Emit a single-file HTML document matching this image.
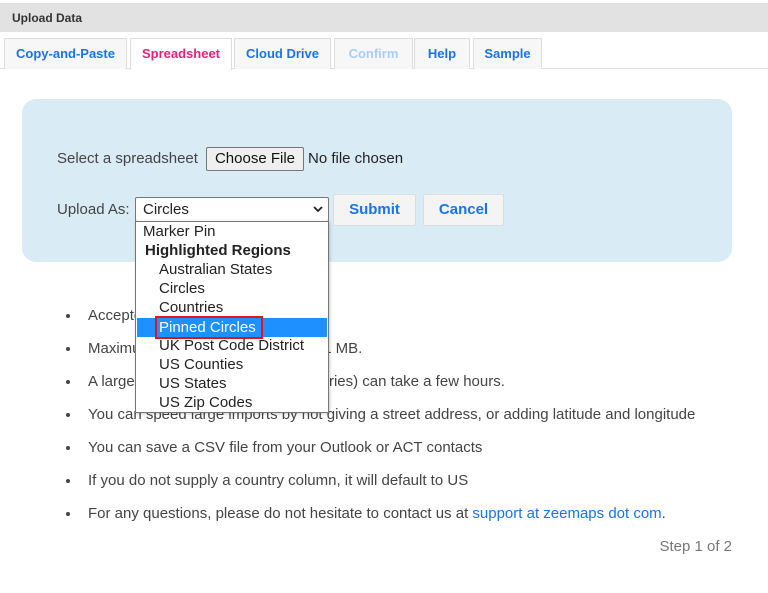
<!DOCTYPE html>
<html><head><style>
*{margin:0;padding:0;box-sizing:border-box}
body{width:768px;height:593px;background:#fff;font-family:"Liberation Sans",Arial,sans-serif;position:relative;overflow:hidden;color:#444}
.a{position:absolute;white-space:nowrap}
.hdr{left:0;top:3px;width:768px;height:29px;background:#e2e2e2;font-weight:bold;font-size:12px;color:#333;padding:8px 12px}
.tab{top:38px;height:31px;border:1px solid #ddd;border-bottom:none;background:#f7f7f7;font-weight:bold;font-size:13px;color:#1a73e8;text-align:center;line-height:30px}
.panel{left:22px;top:99px;width:710px;height:163px;background:#d9ebf4;border-radius:14px}
.t15{font-size:15px;color:#444}
.btn{background:#f4f4f4;border:1px solid #ddd;border-radius:2px;font-weight:bold;font-size:15px;color:#1a73e8;text-align:center}
.li{left:88px;font-size:15px;color:#444}
.dot{left:66px;width:4px;height:4px;border-radius:50%;background:#444}
.opt{left:137px;width:190px;height:19px;font-size:15px;color:#222;line-height:19px}
</style></head><body>
<div class="a hdr">Upload Data</div>
<div class="a" style="left:0;top:68px;width:768px;height:1px;background:#ddd"></div>
<div class="a tab" style="left:4px;width:123px">Copy-and-Paste</div>
<div class="a tab" style="left:130px;width:102px;background:#fff;color:#e8217a;height:32px">Spreadsheet</div>
<div class="a tab" style="left:234px;width:97px">Cloud Drive</div>
<div class="a tab" style="left:334px;width:79px;color:#a9cdf7">Confirm</div>
<div class="a tab" style="left:414px;width:56px">Help</div>
<div class="a tab" style="left:473px;width:69px">Sample</div>

<div class="a panel"></div>
<div class="a t15" style="left:57px;top:150px">Select a spreadsheet</div>
<div class="a" style="left:206px;top:147px;width:98px;height:24px;background:#efefef;border:1px solid #767676;border-radius:2px;font-size:15px;color:#111;text-align:center;line-height:22px">Choose File</div>
<div class="a t15" style="left:308px;top:150px;color:#222">No file chosen</div>
<div class="a t15" style="left:57px;top:201px">Upload As:</div>
<div class="a" style="left:135px;top:197px;width:194px;height:25px;background:#fff;border:1px solid #767676;border-radius:2px;font-size:15px;color:#222;padding:3px 7px">Circles
<svg style="position:absolute;right:5px;top:8px" width="10" height="7" viewBox="0 0 10 7"><path d="M1 1l4 4 4-4" stroke="#222" stroke-width="1.8" fill="none"/></svg></div>
<div class="a btn" style="left:333px;top:194px;width:83px;height:32px;line-height:30px">Submit</div>
<div class="a btn" style="left:423px;top:194px;width:81px;height:32px;line-height:30px">Cancel</div>

<div class="a dot" style="top:314px"></div><div class="a li" style="top:307px">Accepted formats</div>
<div class="a dot" style="top:347px"></div><div class="a li" style="top:340px">Maximum size of the uploaded file: 1 MB.</div>
<div class="a dot" style="top:380px"></div><div class="a li" style="top:373px">A large import (several thousand entries) can take a few hours.</div>
<div class="a dot" style="top:413px"></div><div class="a li" style="top:406px">You can speed large imports by not giving a street address, or adding latitude and longitude</div>
<div class="a dot" style="top:446px"></div><div class="a li" style="top:439px">You can save a CSV file from your Outlook or ACT contacts</div>
<div class="a dot" style="top:479px"></div><div class="a li" style="top:472px">If you do not supply a country column, it will default to US</div>
<div class="a dot" style="top:512px"></div><div class="a li" style="top:505px">For any questions, please do not hesitate to contact us at <span style="color:#1a73e8">support at zeemaps dot com</span>.</div>
<div class="a" style="right:36px;top:538px;font-size:15px;color:#777">Step 1 of 2</div>

<div class="a" style="left:135px;top:221px;width:194px;height:192px;background:#fff;border:1px solid #767676;box-shadow:1px 1px 3px rgba(0,0,0,.2)"></div>
<div class="a opt" style="top:222px;padding-left:6px">Marker Pin</div>
<div class="a opt" style="top:241px;padding-left:8px;font-weight:bold">Highlighted Regions</div>
<div class="a opt" style="top:260px;padding-left:22px">Australian States</div>
<div class="a opt" style="top:279px;padding-left:22px">Circles</div>
<div class="a opt" style="top:298px;padding-left:22px">Countries</div>
<div class="a opt" style="top:318px;padding-left:22px;background:#1e90ff;color:#fff">Pinned Circles</div>
<div class="a" style="left:155px;top:316px;width:108px;height:23px;border:2px solid #e0141e"></div>
<div class="a opt" style="top:336px;padding-left:22px">UK Post Code District</div>
<div class="a opt" style="top:355px;padding-left:22px">US Counties</div>
<div class="a opt" style="top:374px;padding-left:22px">US States</div>
<div class="a opt" style="top:393px;padding-left:22px">US Zip Codes</div>
</body></html>
